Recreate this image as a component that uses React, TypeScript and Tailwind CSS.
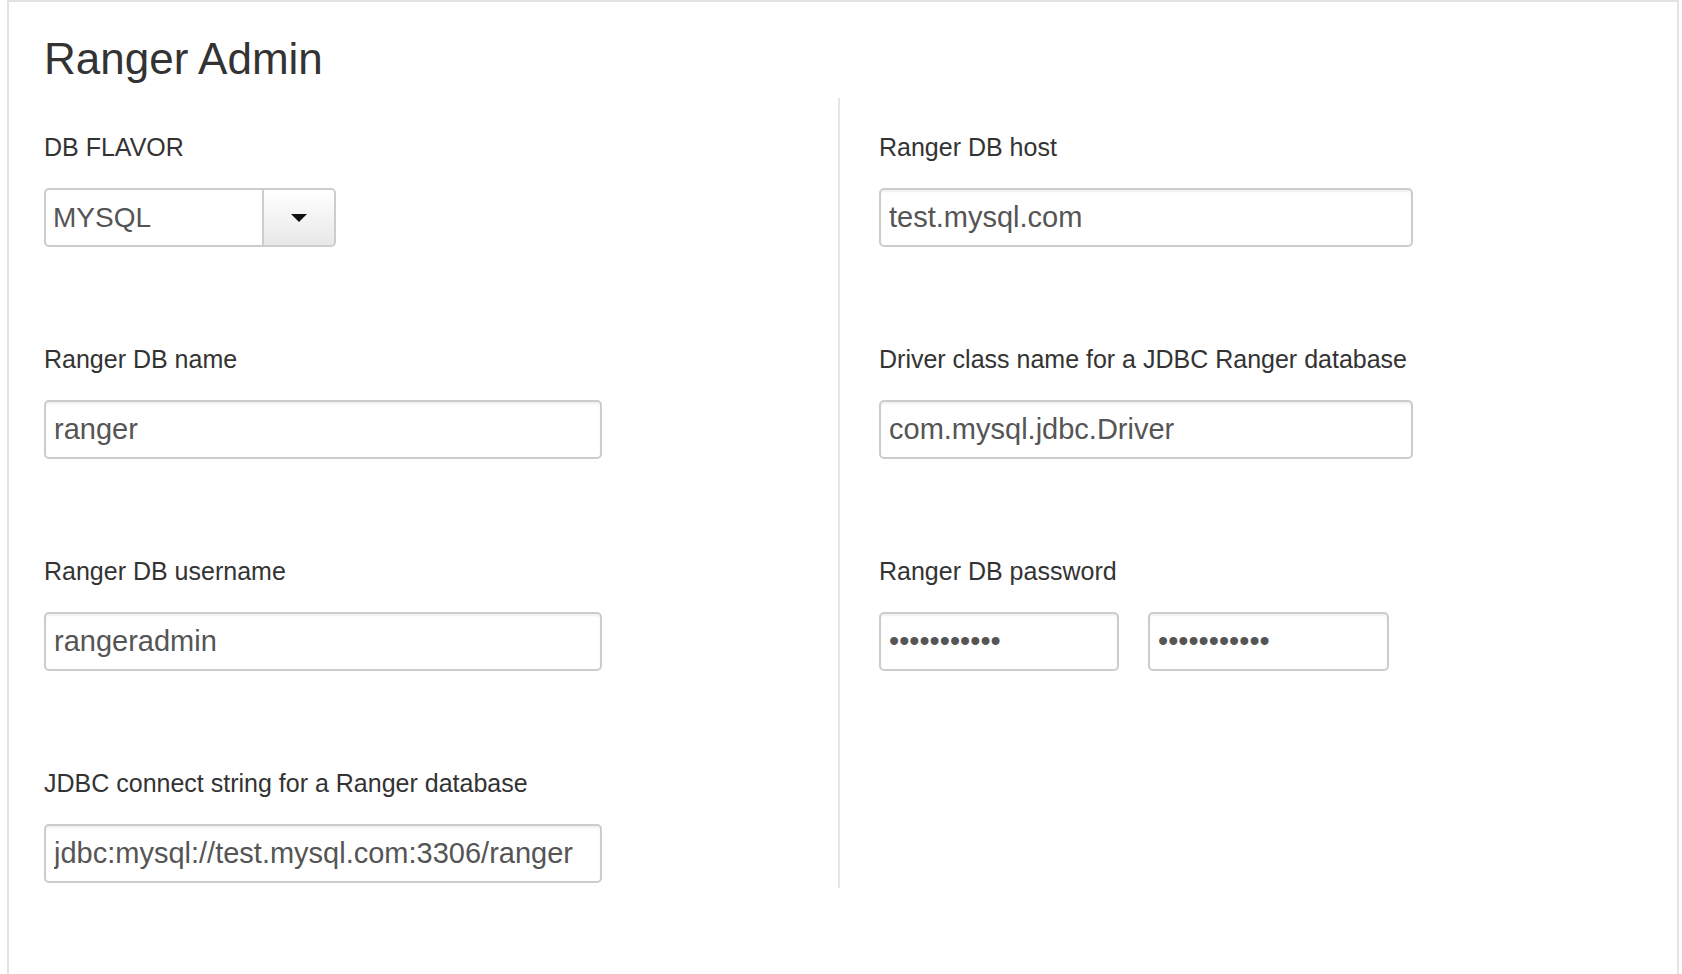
import React from "react";

const font = { fontFamily: '"Liberation Sans", Arial, Helvetica, sans-serif' };

function Label({ children }: { children: React.ReactNode }) {
  return <div className="h-[30px] text-[25px] leading-[30px] text-[#333333]">{children}</div>;
}

function TextInput({ value, width, type = "text" }: { value: string; width: string; type?: string }) {
  return (
    <input
      readOnly
      type={type}
      value={value}
      className={`${width} h-[59px] rounded-[5px] border-2 border-[#cccccc] bg-white px-[8px] text-[29px] text-[#555555] shadow-[inset_0_2px_2px_rgba(0,0,0,0.06)] outline-none`}
      style={font}
    />
  );
}

function Field({ label, children, first }: { label: string; children: React.ReactNode; first?: boolean }) {
  return (
    <div className={first ? "" : "mt-[97px]"}>
      <Label>{label}</Label>
      <div className="mt-[26px] flex">{children}</div>
    </div>
  );
}

export default function App() {
  return (
    <div className="min-h-screen bg-white" style={font}>
      <div className="ml-[7px] h-[974px] w-[1672px] border-x-2 border-t-2 border-[#e3e3e3] pl-[35px]">
        <h1 className="mt-[33px] h-[48px] text-[44px] font-normal leading-[48px] text-[#333333]">Ranger Admin</h1>
        <div className="mt-[15px] flex">
          <div className="w-[796px] border-r-2 border-[#e6e6e6] pb-[5px] pt-[34px]">
            <Field label="DB FLAVOR" first>
              <div className="flex h-[59px] w-[292px] overflow-hidden rounded-[5px] border-2 border-[#cccccc]">
                <div className="flex w-[216px] items-center pl-[7px] text-[28px] text-[#555555]">MYSQL</div>
                <div className="flex flex-1 items-center justify-center border-l-2 border-[#cccccc] bg-gradient-to-b from-white to-[#e8e8e8]">
                  <svg width="16" height="8" viewBox="0 0 16 8">
                    <path d="M0 0 L16 0 L8 8 Z" fill="#111111" />
                  </svg>
                </div>
              </div>
            </Field>
            <Field label="Ranger DB name">
              <TextInput value="ranger" width="w-[558px]" />
            </Field>
            <Field label="Ranger DB username">
              <TextInput value="rangeradmin" width="w-[558px]" />
            </Field>
            <Field label="JDBC connect string for a Ranger database">
              <TextInput value="jdbc:mysql://test.mysql.com:3306/ranger" width="w-[558px]" />
            </Field>
          </div>
          <div className="pl-[39px] pt-[34px]">
            <Field label="Ranger DB host" first>
              <TextInput value="test.mysql.com" width="w-[534px]" />
            </Field>
            <Field label="Driver class name for a JDBC Ranger database">
              <TextInput value="com.mysql.jdbc.Driver" width="w-[534px]" />
            </Field>
            <Field label="Ranger DB password">
              <div className="flex gap-[29px]">
                <TextInput type="password" value="rangerpass1" width="w-[240px]" />
                <TextInput type="password" value="rangerpass1" width="w-[241px]" />
              </div>
            </Field>
          </div>
        </div>
      </div>
    </div>
  );
}
